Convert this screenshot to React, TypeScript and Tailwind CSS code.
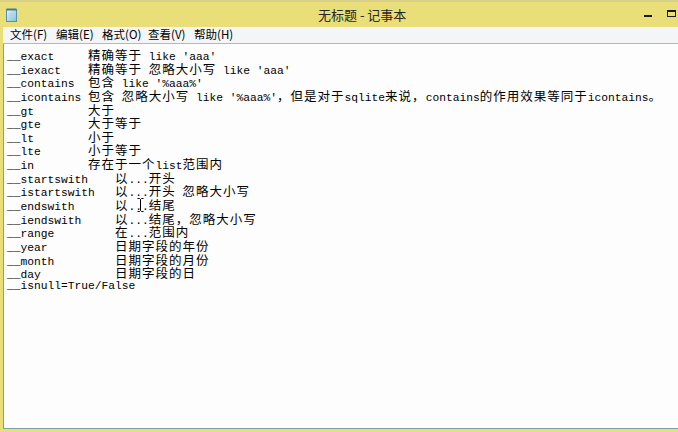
import type { ReactNode } from "react";

const LINES = [
  "__exact     精确等于 like 'aaa'",
  "__iexact    精确等于 忽略大小写 like 'aaa'",
  "__contains  包含 like '%aaa%'",
  "__icontains 包含 忽略大小写 like '%aaa%'，但是对于sqlite来说，contains的作用效果等同于icontains。",
  "__gt        大于",
  "__gte       大于等于",
  "__lt        小于",
  "__lte       小于等于",
  "__in        存在于一个list范围内",
  "__startswith    以...开头",
  "__istartswith   以...开头 忽略大小写",
  "__endswith      以...结尾",
  "__iendswith     以...结尾，忽略大小写",
  "__range         在...范围内",
  "__year          日期字段的年份",
  "__month         日期字段的月份",
  "__day           日期字段的日",
  "__isnull=True/False",
];

const MENUS = ["文件(F)", "编辑(E)", "格式(O)", "查看(V)", "帮助(H)"];

const CJK = /([\u3000-\u303f\u4e00-\u9fff\uff00-\uffef]+)/;

// SimSun-style grid: full-width chars take two ascii cells
function renderLine(text: string): ReactNode[] {
  return text.split(CJK).map((part, i) =>
    i % 2 === 1 ? (
      <span
        key={i}
        className="inline-block h-[13.65px] align-baseline font-['Noto_Sans_CJK_SC',sans-serif] text-[12.5px] leading-[13.65px] tracking-[1px]"
      >
        {part}
      </span>
    ) : (
      <span key={i}>{part}</span>
    )
  );
}

function NotepadIcon() {
  return (
    <svg width="11" height="14" viewBox="0 0 11 14" aria-hidden="true">
      <defs>
        <linearGradient id="np" x1="0" y1="0" x2="1" y2="1">
          <stop offset="0" stopColor="#e6f4fb" />
          <stop offset="1" stopColor="#7fc0df" />
        </linearGradient>
      </defs>
      <rect x="0.5" y="1.5" width="10" height="12" fill="url(#np)" stroke="#5a8fa8" />
      <rect x="0.5" y="0.5" width="10" height="2" fill="#3f7f9c" />
      <path d="M2.5 5.5h6M2.5 7.5h6M2.5 9.5h6" stroke="#a9d3e6" strokeWidth="0.8" />
    </svg>
  );
}

function IBeam() {
  return (
    <svg width="7" height="14" viewBox="0 0 7 14" className="absolute left-[133px] top-[154px]" aria-hidden="true">
      <path d="M0.5 0.5h2l1 1 1-1h2M3.5 1.5v11M0.5 13.5h2l1-1 1 1h2" fill="none" stroke="#000" strokeWidth="1" />
    </svg>
  );
}

export default function App() {
  return (
    <div className="flex h-[432px] w-[678px] flex-col overflow-hidden bg-[#e9de78] font-['Noto_Sans_CJK_SC',sans-serif]">
      <div className="h-[2px] bg-[#d8cf8a]" />

      <div className="flex h-[25px] items-center">
        <div className="ml-[6px] flex">
          <NotepadIcon />
        </div>
        <div className="ml-[301px] text-[13px] leading-none text-[#262626]">无标题 - 记事本</div>
        <div className="ml-auto flex items-center gap-[15px] pr-[2px]">
          <span className="mt-[2px] block h-[2px] w-[8px] bg-[#1a1a1a]" />
          <span className="mb-[3px] block h-[7px] w-[9px] border border-t-2 border-[#1a1a1a]" />
        </div>
      </div>

      <div className="flex flex-1 flex-col pl-[3px]">
        <div className="flex h-[16px] items-center bg-[#f4f5f6] pl-[7px] text-[11.5px] leading-none text-black">
          {MENUS.map((m) => (
            <span key={m} className="w-[46px] shrink-0">
              {m}
            </span>
          ))}
        </div>
        <div className="h-px bg-[#a6bcd6]" />
        <div className="relative flex-1 border-b border-l border-[#7f9fa6] bg-[#fdfdfd] pl-[3px] pt-[4px] font-['Liberation_Mono',monospace] text-[11.25px] text-black">
          {LINES.map((line) => (
            <div key={line} className="h-[13.65px] whitespace-pre leading-[13.65px]">
              {renderLine(line)}
            </div>
          ))}
          <IBeam />
        </div>
      </div>

      <div className="h-[3px]" />
    </div>
  );
}
